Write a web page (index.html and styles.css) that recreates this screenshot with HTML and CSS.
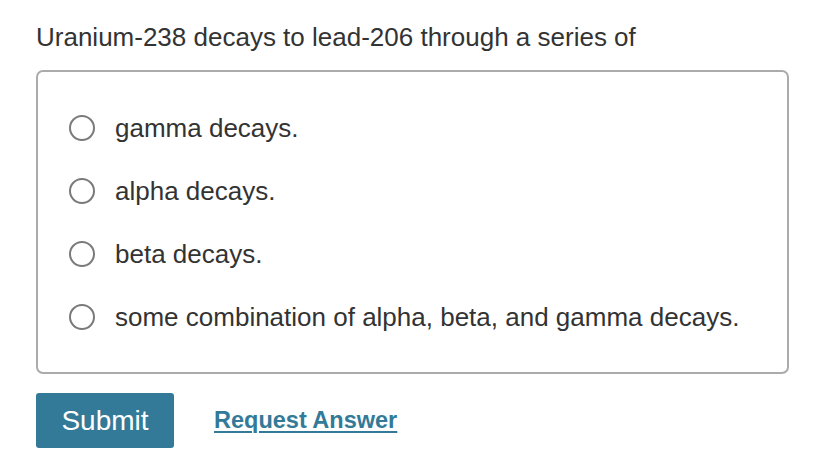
FILE: index.html
```html
<!DOCTYPE html>
<html lang="en">
<head>
  <meta charset="UTF-8" />
  <title>Question</title>
  <link rel="stylesheet" href="styles.css">
</head>
<body>
  <div class="question">
    <p class="prompt">Uranium-238 decays to lead-206 through a series of</p>

    <div class="choices">
      <label class="choice"><input type="radio" name="answer"><span class="dot"></span>gamma decays.</label>
      <label class="choice"><input type="radio" name="answer"><span class="dot"></span>alpha decays.</label>
      <label class="choice"><input type="radio" name="answer"><span class="dot"></span>beta decays.</label>
      <label class="choice"><input type="radio" name="answer"><span class="dot"></span>some combination of alpha, beta, and gamma decays.</label>
    </div>

    <div class="actions">
      <button class="btn-submit">Submit</button>
      <a href="#" class="request">Request Answer</a>
    </div>
  </div>
</body>
</html>
```

FILE: styles.css
```css
* { margin: 0; padding: 0; box-sizing: border-box; }

body {
  background: #fff;
  color: #333;
  font-family: "Liberation Sans", Arial, sans-serif;
}

.question { padding: 22px 29px 0 36px; }

.prompt {
  font-size: 26px;
  line-height: 30px;
  margin-bottom: 18px;
}

/* answer box */
.choices {
  border: 2px solid #ababab;
  border-radius: 7px;
  padding: 41px 0 40px 31px;
  display: flex;
  flex-direction: column;
  gap: 33px;
}
.choice {
  display: flex;
  align-items: center;
  font-size: 26px;
  line-height: 30px;
  cursor: pointer;
}
.choice input { display: none; }
.dot {
  width: 26px; height: 26px;
  border: 2px solid #7a7a7a;
  border-radius: 50%;
  margin-right: 20px;
  flex: none;
}
.choice input:checked + .dot { border-color: #337a98; box-shadow: inset 0 0 0 5px #fff, inset 0 0 0 12px #337a98; }

/* buttons */
.actions {
  display: flex;
  align-items: center;
  margin-top: 19px;
  gap: 40px;
}
.btn-submit {
  background: #337a98;
  color: #fff;
  border: none;
  border-radius: 3px;
  width: 138px; height: 55px;
  font-family: inherit;
  font-size: 28px;
  cursor: pointer;
}
.request {
  color: #337a98;
  font-weight: bold;
  font-size: 23.5px;
  text-decoration: underline;
  text-decoration-thickness: 2px;
  text-underline-offset: 3px;
}
```
